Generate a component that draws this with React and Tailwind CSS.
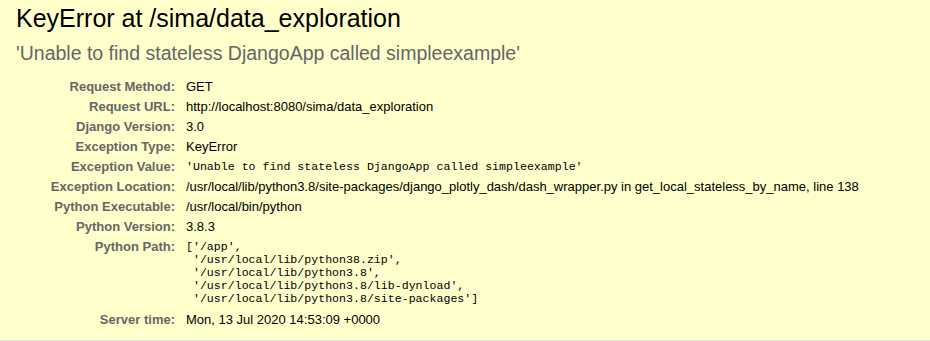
import React from 'react';

const rows = [
    { label: 'Request Method:', value: 'GET' },
    { label: 'Request URL:', value: 'http://localhost:8080/sima/data_exploration' },
    { label: 'Django Version:', value: '3.0' },
    { label: 'Exception Type:', value: 'KeyError' },
    { label: 'Exception Value:', value: "'Unable to find stateless DjangoApp called simpleexample'", mono: true },
    { label: 'Exception Location:', value: '/usr/local/lib/python3.8/site-packages/django_plotly_dash/dash_wrapper.py in get_local_stateless_by_name, line 138' },
    { label: 'Python Executable:', value: '/usr/local/bin/python' },
    { label: 'Python Version:', value: '3.8.3' },
    {
        label: 'Python Path:',
        value: "['/app',\n '/usr/local/lib/python38.zip',\n '/usr/local/lib/python3.8',\n '/usr/local/lib/python3.8/lib-dynload',\n '/usr/local/lib/python3.8/site-packages']",
        pre: true
    },
    { label: 'Server time:', value: 'Mon, 13 Jul 2020 14:53:09 +0000' },
];

const App = () => {
    return (
        <div className="bg-white min-h-[341px] font-['Liberation_Sans',Arial,sans-serif]">
            {/* Summary block */}
            <div className="bg-[#ffffcc] border-b border-[#dddddd] h-[341px] pl-[16px] pt-[3px]">
                <h1 className="text-[25px] leading-[30px] text-black font-normal">KeyError at /sima/data_exploration</h1>
                <h2 className="text-[19.5px] leading-[24px] text-[#666666] font-normal mt-[8px]">
                    'Unable to find stateless DjangoApp called simpleexample'
                </h2>

                <div className="mt-[12px] flex flex-col">
                    {rows.map((r) => (
                        <div key={r.label} className={`flex gap-[11px] pt-[2px] ${r.pre ? 'pb-[5px]' : 'pb-[2px]'}`}>
                            <div className="w-[159px] text-right text-[13px] leading-[16px] font-bold text-[#666666] shrink-0">
                                {r.label}
                            </div>
                            {r.pre ? (
                                <pre className="font-['Liberation_Mono','Courier_New',monospace] text-[11.6px] leading-[13px] pt-[1px] text-black whitespace-pre">
                                    {r.value}
                                </pre>
                            ) : r.mono ? (
                                <code className="font-['Liberation_Mono','Courier_New',monospace] text-[11.6px] leading-[16px] text-black">
                                    {r.value}
                                </code>
                            ) : (
                                <div className="text-[13px] leading-[16px] text-black">{r.value}</div>
                            )}
                        </div>
                    ))}
                </div>
            </div>
        </div>
    );
};

export default App;
